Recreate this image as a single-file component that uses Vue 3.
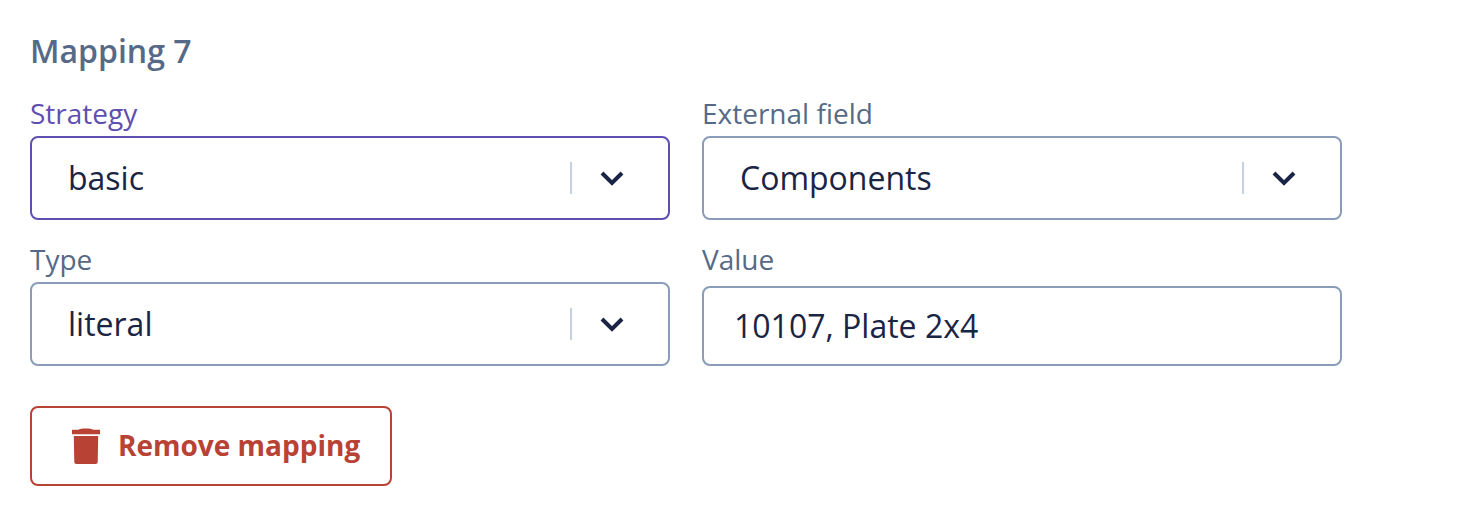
<template>
  <div class="mapping">
    <h3 class="title">Mapping 7</h3>
    <div class="fields">
      <div class="field focused">
        <label>Strategy</label>
        <div class="select">
          <span class="select-value">basic</span>
          <span class="separator"></span>
          <svg class="chevron" viewBox="0 0 24 16"><path d="M2 3l10 10L22 3" /></svg>
        </div>
      </div>
      <div class="field">
        <label>External field</label>
        <div class="select">
          <span class="select-value">Components</span>
          <span class="separator"></span>
          <svg class="chevron" viewBox="0 0 24 16"><path d="M2 3l10 10L22 3" /></svg>
        </div>
      </div>
      <div class="field">
        <label>Type</label>
        <div class="select">
          <span class="select-value">literal</span>
          <span class="separator"></span>
          <svg class="chevron" viewBox="0 0 24 16"><path d="M2 3l10 10L22 3" /></svg>
        </div>
      </div>
      <div class="field">
        <label>Value</label>
        <input class="text-input" type="text" value="10107, Plate 2x4" />
      </div>
    </div>
    <button class="remove-button">
      <svg class="trash" viewBox="0 0 28 36">
        <path d="M6.300 1.800C8.500 0 19 0 21.300 1.800H28v4.500H0V1.800z" />
        <path d="M1.800 8h24.400l-.5 26c0 1.200-.8 2-2 2H4.300c-1.200 0-2-.8-2-2z" />
      </svg>
      <span class="remove-label">Remove mapping</span>
    </button>
  </div>
</template>

<script setup>
</script>

<style scoped>
.mapping {
  width: 1462px;
  height: 514px;
  box-sizing: border-box;
  padding: 30px 30px 0;
  background: #fff;
  font-family: "Open Sans", sans-serif;
}

.title {
  margin: 0 0 20px;
  font-size: 32px;
  line-height: 42px;
  font-weight: 600;
  color: #566a87;
}

.fields {
  display: grid;
  grid-template-columns: 640px 640px;
  column-gap: 32px;
  row-gap: 18px;
  margin-bottom: 40px;
}

.field {
  display: flex;
  flex-direction: column;
}

.field label {
  margin-bottom: 2px;
  font-size: 28px;
  line-height: 42px;
  color: #566a87;
}

.select {
  display: flex;
  align-items: center;
  height: 84px;
  box-sizing: border-box;
  padding: 0 44px 0 36px;
  border: 2px solid #8a9cb8;
  border-radius: 8px;
}

.focused label {
  color: #5f4fb0;
}

.focused .select {
  border-color: #5f4fb0;
}

.select-value {
  flex: 1;
  margin-bottom: 2px;
  font-size: 32px;
  color: #1a2444;
}

.separator {
  width: 2px;
  height: 32px;
  margin-right: 28px;
  background: #c5d0e0;
}

.chevron {
  width: 24px;
  height: 16px;
  fill: none;
  stroke: #1a2444;
  stroke-width: 4;
}

.text-input {
  height: 80px;
  margin-top: 4px;
  box-sizing: border-box;
  padding: 0 30px 2px;
  border: 2px solid #8a9cb8;
  border-radius: 8px;
  font-family: inherit;
  font-size: 32px;
  color: #1a2444;
  outline: none;
}

.remove-button {
  display: flex;
  align-items: center;
  gap: 18px;
  width: 362px;
  height: 80px;
  box-sizing: border-box;
  padding: 0 0 0 40px;
  border: 2px solid #b84233;
  border-radius: 8px;
  background: #fff;
  font-family: inherit;
  font-size: 28px;
  font-weight: 700;
  color: #b84233;
}

.remove-label {
  margin-bottom: 2px;
}

.trash {
  width: 28px;
  height: 36px;
  fill: #b84233;
}
</style>
